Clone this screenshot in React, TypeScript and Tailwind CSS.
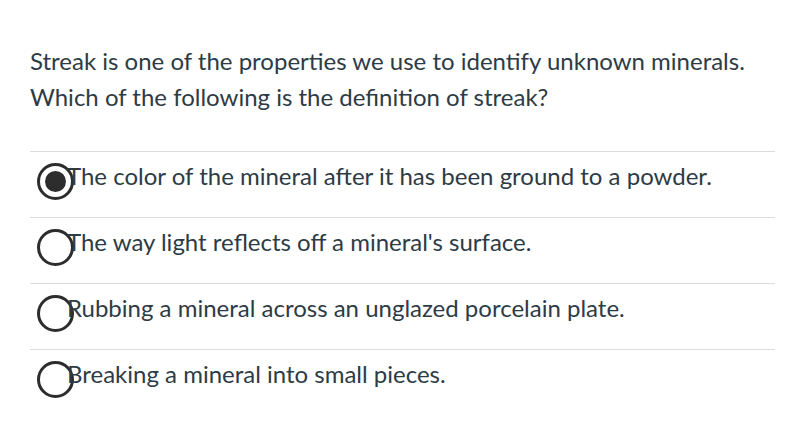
import React from 'react'

const OPTIONS = [
  'The color of the mineral after it has been ground to a powder.',
  "The way light reflects off a mineral's surface.",
  'Rubbing a mineral across an unglazed porcelain plate.',
  'Breaking a mineral into small pieces.',
]

function Radio({ checked }: { checked: boolean }) {
  return (
    <span className="relative z-0 flex h-[37px] w-[37px] shrink-0 items-center justify-center rounded-full border-[3px] border-[#2d2d2d] bg-white">
      {checked && <span className="h-[21px] w-[21px] rounded-full bg-[#2d2d2d]" />}
    </span>
  )
}

export default function App() {
  return (
    <div className="min-h-[443px] bg-white pl-[30px] pr-[29px] pt-[43px] font-['Lato',_'Liberation_Sans',_sans-serif] text-[#2d3b45]">
      <p className="text-[24px] leading-[36px]">
        Streak is one of the properties we use to identify unknown minerals.
        <br />
        Which of the following is the definition of streak?
      </p>

      <ul className="mt-[36px]">
        {OPTIONS.map((opt, i) => (
          <li
            key={opt}
            className="flex h-[66px] items-start border-t border-[#dcdcdc] pl-[7px] pt-[11px]"
          >
            <Radio checked={i === 0} />
            <span className="relative z-10 -ml-[7px] -mt-[2px] text-[24px] leading-[30px]">{opt}</span>
          </li>
        ))}
      </ul>
    </div>
  )
}
